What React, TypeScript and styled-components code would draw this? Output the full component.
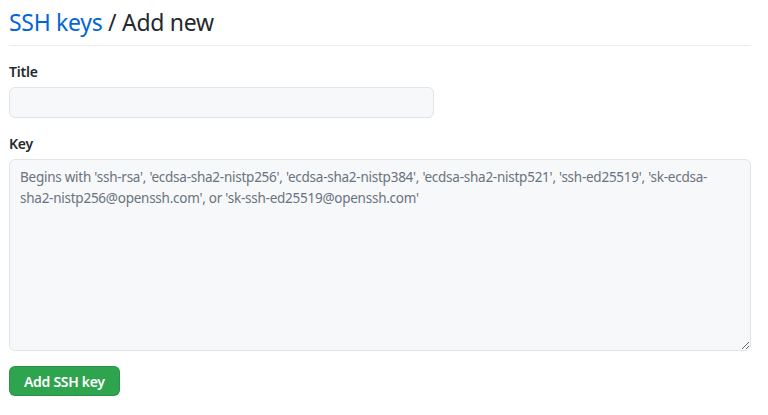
import React, { useState } from "react";
import styled, { createGlobalStyle } from "styled-components";

const GlobalStyle = createGlobalStyle`
  body {
    margin: 0;
    background: #ffffff;
    font-family: "Noto Sans", "Liberation Sans", sans-serif;
    color: #24292e;
  }
`;

const Page = styled.div`
  width: 742px;
  padding: 0 0 0 9px;
`;

const Header = styled.div`
  padding-top: 6px;
  padding-bottom: 6px;
  border-bottom: 1px solid #eaecef;
  margin-bottom: 16px;
`;

const Heading = styled.h2`
  margin: 0;
  font-size: 23px;
  font-weight: 400;
  letter-spacing: -0.3px;
  line-height: 33px;
  color: #24292e;
`;

const Crumb = styled.a`
  color: #0366d6;
  text-decoration: none;
`;

const Form = styled.form`
  display: flex;
  flex-direction: column;
`;

const Field = styled.div<{ $gap?: number }>`
  display: flex;
  flex-direction: column;
  margin-bottom: ${(p) => p.$gap ?? 15}px;
`;

const Label = styled.label`
  font-size: 14px;
  font-weight: 600;
  letter-spacing: -0.2px;
  line-height: 20px;
  margin-bottom: 5px;
`;

const TextInput = styled.input`
  box-sizing: border-box;
  width: 425px;
  height: 31px;
  padding: 5px 12px;
  font-family: inherit;
  font-size: 14px;
  background: #f6f8fa;
  border: 1px solid #e1e4e8;
  border-radius: 6px;
  outline: none;
`;

const KeyArea = styled.textarea`
  box-sizing: border-box;
  width: 742px;
  height: 192px;
  padding: 7px 30px 8px 10px;
  font-family: inherit;
  font-size: 13.5px;
  letter-spacing: -0.25px;
  line-height: 21px;
  color: #24292e;
  background: #f6f8fa;
  border: 1px solid #e1e4e8;
  border-radius: 6px;
  outline: none;
  resize: vertical;

  &::placeholder {
    color: #6a737d;
  }
`;

const SubmitButton = styled.button`
  align-self: flex-start;
  box-sizing: border-box;
  height: 30px;
  padding: 0 14px;
  font-family: inherit;
  font-size: 14px;
  font-weight: 600;
  letter-spacing: -0.3px;
  color: #ffffff;
  background: #2ea44f;
  border: 1px solid rgba(27, 31, 35, 0.15);
  border-radius: 6px;
  cursor: pointer;
`;

export default function App() {
  const [title, setTitle] = useState("");
  const [key, setKey] = useState("");

  return (
    <>
      <GlobalStyle />
      <Page>
        <Header>
          <Heading>
            <Crumb href="#">SSH keys</Crumb> / Add new
          </Heading>
        </Header>
        <Form onSubmit={(e) => e.preventDefault()}>
          <Field $gap={16}>
            <Label htmlFor="ssh-title">Title</Label>
            <TextInput
              id="ssh-title"
              value={title}
              onChange={(e) => setTitle(e.target.value)}
            />
          </Field>
          <Field>
            <Label htmlFor="ssh-key">Key</Label>
            <KeyArea
              id="ssh-key"
              value={key}
              onChange={(e) => setKey(e.target.value)}
              placeholder="Begins with 'ssh-rsa', 'ecdsa-sha2-nistp256', 'ecdsa-sha2-nistp384', 'ecdsa-sha2-nistp521', 'ssh-ed25519', 'sk-ecdsa-sha2-nistp256@openssh.com', or 'sk-ssh-ed25519@openssh.com'"
            />
          </Field>
          <SubmitButton type="submit">Add SSH key</SubmitButton>
        </Form>
      </Page>
    </>
  );
}
